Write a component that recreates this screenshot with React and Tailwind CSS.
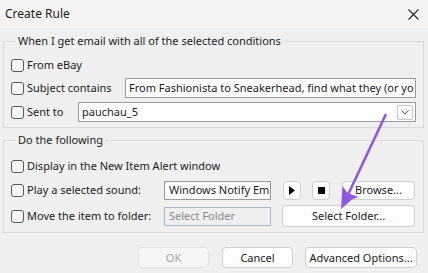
import React from "react";

const font = { fontFamily: '"Noto Sans", "Open Sans", sans-serif' };

function Check() {
  return (
    <span className="inline-block w-[13px] h-[13px] shrink-0 rounded-[3px] border border-[#5a5a5a] bg-[#f8f8f8]" />
  );
}

function Btn({ children, className = "", disabled = false }) {
  return (
    <div
      className={
        "flex items-center justify-center whitespace-nowrap rounded-[4px] border " +
        (disabled
          ? "border-[#e2e2e2] bg-[#f6f6f6] text-[#a3a3a3] "
          : "border-[#cfcfcf] bg-[#fdfdfd] text-[#1b1b1b] ") +
        className
      }
    >
      {children}
    </div>
  );
}

export default function App() {
  return (
    <div
      className="relative w-[428px] h-[273px] overflow-hidden bg-[#f0f0f0] text-[11px] leading-[16px] text-[#1b1b1b]"
      style={font}
    >
      {/* Title bar */}
      <div className="flex h-[29px] items-center justify-between bg-[#f5f4f2] pl-[5px] pr-[9px] border-b border-[#ececec]">
        <span className="text-[12px]">Create Rule</span>
        <svg width="11" height="11" viewBox="0 0 11 11">
          <path d="M0.5 0.5 L10.5 10.5 M10.5 0.5 L0.5 10.5" stroke="#222" strokeWidth="1.1" />
        </svg>
      </div>

      <div className="px-[3px] pr-[4px]">
        {/* Group 1 */}
        <fieldset className="mt-[4px] border border-[#dadada] pr-[7px] pl-[7px] pb-[5px]">
          <legend className="ml-[5px] px-[2px] leading-[16px]">
            When I get email with all of the selected conditions
          </legend>
          <div className="mt-[6px] flex h-[20px] items-center gap-[3px]">
            <Check />
            <span>From eBay</span>
          </div>
          <div className="mt-[3px] flex h-[20px] items-center">
            <div className="flex w-[114px] items-center gap-[3px]">
              <Check />
              <span>Subject contains</span>
            </div>
            <div className="flex h-[20px] flex-1 items-center overflow-hidden whitespace-nowrap border border-[#9a9a9a] bg-white pl-[3px]">
              From Fashionista to Sneakerhead, find what they (or yo
            </div>
          </div>
          <div className="mt-[4px] flex h-[20px] items-center">
            <div className="flex w-[67px] items-center gap-[3px]">
              <Check />
              <span>Sent to</span>
            </div>
            <div className="flex h-[20px] flex-1 items-center justify-between border border-[#9a9a9a] bg-white pl-[3px] pr-[2px]">
              <span>pauchau_5</span>
              <div className="flex h-[15px] w-[16px] items-center justify-center rounded-[2px] border border-[#c8c8c8] bg-[#fafafa]">
                <svg width="8" height="5" viewBox="0 0 8 5">
                  <path d="M0.5 0.5 L4 4 L7.5 0.5" fill="none" stroke="#555" strokeWidth="1" />
                </svg>
              </div>
            </div>
          </div>
        </fieldset>

        {/* Group 2 */}
        <fieldset className="mt-[4px] border border-[#dadada] pl-[7px] pr-[8px] pb-[5px]">
          <legend className="ml-[5px] px-[2px] leading-[16px]">Do the following</legend>
          <div className="mt-[8px] flex h-[20px] items-center gap-[3px]">
            <Check />
            <span>Display in the New Item Alert window</span>
          </div>
          <div className="mt-[4px] flex h-[20px] items-center">
            <div className="flex w-[153px] items-center gap-[3px]">
              <Check />
              <span>Play a selected sound:</span>
            </div>
            <div className="flex h-[19px] w-[107px] items-center overflow-hidden whitespace-nowrap border border-[#9a9a9a] bg-white pl-[4px]">
              Windows Notify Em
            </div>
            <Btn className="ml-[12px] h-[19px] w-[18px]">
              <svg width="6" height="9" viewBox="0 0 6 9">
                <path d="M0 0 L6 4.5 L0 9 Z" fill="#000" />
              </svg>
            </Btn>
            <Btn className="ml-[11px] h-[19px] w-[18px]">
              <span className="block h-[7px] w-[7px] bg-black" />
            </Btn>
            <Btn className="ml-[12px] h-[19px] w-[73px]">Browse...</Btn>
          </div>
          <div className="mt-[5px] flex h-[22px] items-center">
            <div className="flex w-[153px] items-center gap-[3px]">
              <Check />
              <span>Move the item to folder:</span>
            </div>
            <div className="flex h-[19px] w-[107px] items-center border border-[#a9b8c8] bg-[#eef0f2] pl-[4px] text-[#8a8a8a]">
              Select Folder
            </div>
            <Btn className="ml-[11px] h-[22px] w-[133px]">Select Folder...</Btn>
          </div>
        </fieldset>

        {/* Bottom buttons */}
        <div className="mt-[14px] flex justify-end pr-[7px]">
          <Btn disabled className="h-[21px] w-[71px]">OK</Btn>
          <Btn className="ml-[13px] h-[21px] w-[71px]">Cancel</Btn>
          <Btn className="ml-[12px] h-[21px] w-[112px]">Advanced Options...</Btn>
        </div>
      </div>

      {/* Annotation arrow */}
      <svg className="pointer-events-none absolute left-0 top-0" width="428" height="273" viewBox="0 0 428 273">
        <path d="M385.5 115 L346 199" stroke="#9156e2" strokeWidth="2.6" strokeLinecap="round" fill="none" />
        <path d="M341 209 L342.5 186 L347.5 193 L358.5 197 L352 199.5 Z" fill="#9156e2" />
      </svg>
    </div>
  );
}
